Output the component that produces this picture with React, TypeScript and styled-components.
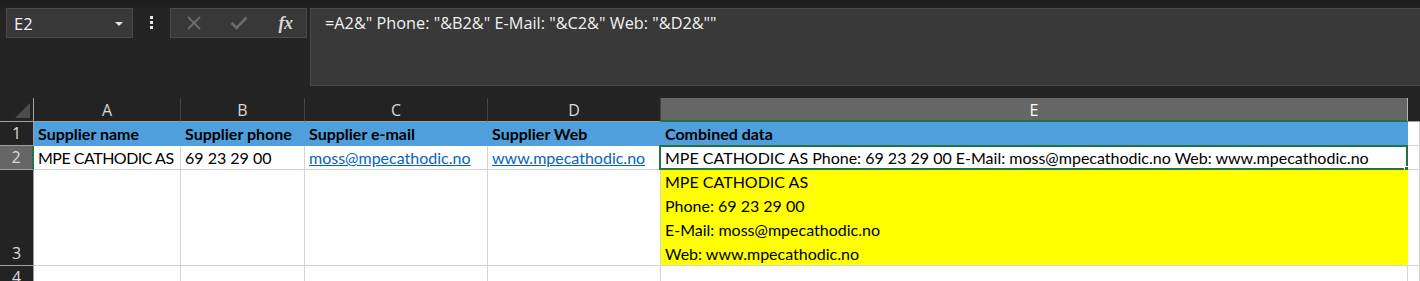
import React from "react";
import styled, { createGlobalStyle } from "styled-components";

const GlobalStyle = createGlobalStyle`
  html, body {
    margin: 0;
    padding: 0;
    background: #232323;
    overflow: hidden;
  }
  * {
    box-sizing: border-box;
  }
`;

const columns = ["A", "B", "C", "D", "E"];
const colWidths = "34px 147px 124px 183px 173px 747px 1fr";

const App = () => {
  return (
    <>
      <GlobalStyle />
      <Page>
        <Toolbar>
          <NameBox>
            <NameText>E2</NameText>
            <Caret />
          </NameBox>
          <DotsWrap>
            <Dot />
            <Dot />
            <Dot />
          </DotsWrap>
          <ButtonsBox>
            <IconButton>
              <svg width="16" height="16" viewBox="0 0 16 16">
                <path d="M2 2 L14 14 M14 2 L2 14" stroke="#6b6b6b" strokeWidth="2" fill="none" />
              </svg>
            </IconButton>
            <IconButton>
              <svg width="18" height="16" viewBox="0 0 18 16">
                <path d="M1.5 8 L6.5 13 L16.5 2.5" stroke="#6b6b6b" strokeWidth="2.6" fill="none" />
              </svg>
            </IconButton>
            <IconButton>
              <FxText>fx</FxText>
            </IconButton>
          </ButtonsBox>
          <FormulaBar>=A2&amp;" Phone: "&amp;B2&amp;" E-Mail: "&amp;C2&amp;" Web: "&amp;D2&amp;""</FormulaBar>
        </Toolbar>

        <Sheet>
          <Corner>
            <CornerTriangle />
          </Corner>
          {columns.map((c) => (
            <ColHeader key={c} selected={c === "E"}>
              {c}
            </ColHeader>
          ))}
          <ColHeaderRest />

          <RowHeader>1</RowHeader>
          <Cell kind="header">Supplier name</Cell>
          <Cell kind="header">Supplier phone</Cell>
          <Cell kind="header">Supplier e-mail</Cell>
          <Cell kind="header">Supplier Web</Cell>
          <Cell kind="header">Combined data</Cell>
          <Cell kind="plain" />

          <RowHeader selected>2</RowHeader>
          <Cell kind="plain" clip condensed>
            MPE CATHODIC AS
          </Cell>
          <Cell kind="plain">69 23 29 00</Cell>
          <Cell kind="link">
            <LinkText>moss@mpecathodic.no</LinkText>
          </Cell>
          <Cell kind="link">
            <LinkText>www.mpecathodic.no</LinkText>
          </Cell>
          <Cell kind="plain">
            MPE CATHODIC AS Phone: 69 23 29 00 E-Mail: moss@mpecathodic.no Web: www.mpecathodic.no
            <Selection>
              <FillHandle />
            </Selection>
          </Cell>
          <Cell kind="plain" />

          <RowHeader>3</RowHeader>
          <Cell kind="plain" />
          <Cell kind="plain" />
          <Cell kind="plain" />
          <Cell kind="plain" />
          <Cell kind="yellow">
            <Lines>
              <span>MPE CATHODIC AS</span>
              <span>Phone: 69 23 29 00</span>
              <span>E-Mail: moss@mpecathodic.no</span>
              <span>Web: www.mpecathodic.no</span>
            </Lines>
          </Cell>
          <Cell kind="plain" />

          <RowHeader>4</RowHeader>
          <Cell kind="plain" />
          <Cell kind="plain" />
          <Cell kind="plain" />
          <Cell kind="plain" />
          <Cell kind="plain" />
          <Cell kind="plain" />
        </Sheet>
      </Page>
    </>
  );
};

export default App;

const Page = styled.div`
  width: 1420px;
  height: 281px;
  overflow: hidden;
  background: #232323;
`;

const Toolbar = styled.div`
  display: flex;
  align-items: flex-start;
  height: 98px;
  padding: 8px 0 0 6px;
  background: linear-gradient(#1e1e1e 0, #1f1f1f 7px, #242424 8px);
`;

const NameBox = styled.div`
  display: flex;
  align-items: center;
  justify-content: space-between;
  width: 127px;
  height: 30px;
  padding: 0 9px 0 7px;
  background: #383838;
  border: 1px solid #4a4a4a;
`;

const NameText = styled.span`
  font-family: "Open Sans", "Noto Sans", sans-serif;
  font-size: 16.5px;
  color: #f0f0f0;
`;

const Caret = styled.span`
  width: 0;
  height: 0;
  border-left: 4px solid transparent;
  border-right: 4px solid transparent;
  border-top: 4px solid #e6e6e6;
  margin-top: 1px;
`;

const DotsWrap = styled.div`
  display: flex;
  flex-direction: column;
  align-items: center;
  gap: 2px;
  width: 37px;
  padding-top: 8px;
`;

const Dot = styled.span`
  width: 3px;
  height: 3px;
  background: #e8e8e8;
`;

const ButtonsBox = styled.div`
  display: flex;
  align-items: center;
  width: 137px;
  height: 30px;
  background: #383838;
  border: 1px solid #4a4a4a;
`;

const IconButton = styled.div`
  display: flex;
  align-items: center;
  justify-content: center;
  width: 45px;
  height: 100%;
`;

const FxText = styled.span`
  font-family: "Liberation Serif", "DejaVu Serif", serif;
  font-style: italic;
  font-weight: bold;
  font-size: 18px;
  color: #d6d6d6;
  letter-spacing: -0.5px;
  margin-left: 4px;
`;

const FormulaBar = styled.div`
  flex: 1;
  height: 78px;
  margin-left: 3px;
  padding: 2px 14px;
  background: #393939;
  border: 1px solid #4a4a4a;
  border-right: none;
  font-family: "Open Sans", "Noto Sans", sans-serif;
  font-size: 16.3px;
  line-height: 24px;
  color: #f2f2f2;
  white-space: pre;
`;

const Sheet = styled.div`
  display: grid;
  grid-template-columns: ${colWidths};
  grid-template-rows: 24px 24px 24px 96px 1fr;
  height: 183px;
  background: #ffffff;
`;

const Corner = styled.div`
  position: relative;
  background: #232323;
  border-right: 1px solid #9e9e9e;
  border-bottom: 1px solid #9e9e9e;
`;

const CornerTriangle = styled.span`
  position: absolute;
  right: 3px;
  bottom: 3px;
  width: 0;
  height: 0;
  border-left: 15px solid transparent;
  border-bottom: 15px solid #4c4c4c;
`;

const ColHeader = styled.div<{ selected?: boolean }>`
  display: flex;
  align-items: center;
  justify-content: center;
  background: ${(p) => (p.selected ? "#666666" : "#232323")};
  border-right: 1px solid ${(p) => (p.selected ? "#b5b5b5" : "#444444")};
  border-bottom: ${(p) => (p.selected ? "2px solid #217346" : "1px solid #9e9e9e")};
  font-family: "Open Sans", "Noto Sans", sans-serif;
  font-size: 16px;
  color: ${(p) => (p.selected ? "#ffffff" : "#d8d8d8")};
  padding-top: 1px;
`;

const ColHeaderRest = styled.div`
  background: #232323;
  border-bottom: 1px solid #9e9e9e;
`;

const RowHeader = styled.div<{ selected?: boolean }>`
  display: flex;
  align-items: flex-end;
  justify-content: center;
  padding-bottom: 1px;
  background: ${(p) => (p.selected ? "#666666" : "#232323")};
  border-right: ${(p) => (p.selected ? "2px solid #217346" : "1px solid #9e9e9e")};
  border-bottom: 1px solid #9e9e9e;
  font-family: "Open Sans", "Noto Sans", sans-serif;
  font-size: 16px;
  line-height: 22px;
  color: #dcdcdc;
`;

type Kind = "header" | "plain" | "link" | "yellow";

const cellBg: Record<Kind, string> = {
  header: "#4e9fdc",
  plain: "#ffffff",
  link: "#ffffff",
  yellow: "#ffff00",
};

const Cell = styled.div<{ kind: Kind; clip?: boolean; condensed?: boolean }>`
  position: relative;
  display: flex;
  align-items: ${(p) => (p.kind === "yellow" ? "flex-start" : "flex-end")};
  padding: 0 3px 1px 4px;
  background: ${(p) => cellBg[p.kind]};
  border-right: 1px solid ${(p) => (p.kind === "header" || p.kind === "yellow" ? cellBg[p.kind] : "#d4d4d4")};
  border-bottom: 1px solid ${(p) => (p.kind === "header" ? cellBg.header : "#d4d4d4")};
  font-family: Lato, "Open Sans", sans-serif;
  font-size: 16px;
  font-weight: ${(p) => (p.kind === "header" ? 700 : 400)};
  line-height: 21px;
  letter-spacing: ${(p) => (p.condensed ? "-0.5px" : "normal")};
  color: #000000;
  white-space: nowrap;
  overflow: ${(p) => (p.clip ? "hidden" : "visible")};
`;

const LinkText = styled.span`
  color: #0563c1;
  text-decoration: underline;
`;

const Lines = styled.div`
  display: flex;
  flex-direction: column;
  line-height: 24px;
`;

const Selection = styled.div`
  position: absolute;
  left: -2px;
  top: -1px;
  right: -1px;
  bottom: -1px;
  border: 2px solid #217346;
  pointer-events: none;
`;

const FillHandle = styled.span`
  position: absolute;
  right: -4px;
  bottom: -4px;
  width: 6px;
  height: 6px;
  background: #217346;
  border: 1px solid #ffffff;
`;
